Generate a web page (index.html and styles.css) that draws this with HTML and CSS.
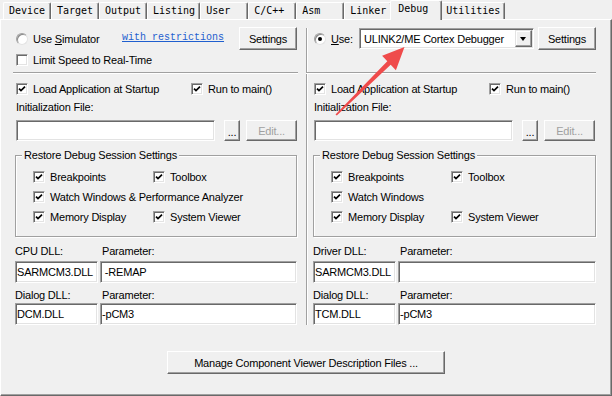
FILE: index.html
```html
<!DOCTYPE html>
<html lang="en">
<head>
    <meta charset="UTF-8">
    <title>Options - Debug</title>
    <link rel="stylesheet" href="styles.css">
</head>
<body>
<div class="dialog">
    <div class="tabs">
        <span class="tab">Device</span>
        <span class="tab">Target</span>
        <span class="tab">Output</span>
        <span class="tab">Listing</span>
        <span class="tab">User</span>
        <span class="tab">C/C++</span>
        <span class="tab">Asm</span>
        <span class="tab">Linker</span>
        <span class="tab active">Debug</span>
        <span class="tab">Utilities</span>
    </div>

    <div class="panel">
        <div class="columns">
            <!-- simulator side -->
            <div class="pane">
                <div class="top-row">
                    <span class="opt sim-opt"><span class="radio"></span><span>Use <u>S</u>imulator</span></span>
                    <span class="link">with restrictions</span>
                    <span class="btn settings">Settings</span>
                </div>
                <span class="opt limit-row"><span class="check"></span>Limit Speed to Real-Time</span>
                <div class="sep sep-left"></div>
                <div class="pair">
                    <span class="opt col-a"><span class="check"><svg viewBox="0 0 8 8"><path d="M1 3.6 L3 5.6 L7 1.6"/></svg></span>Load Application at Startup</span>
                    <span class="opt"><span class="check"><svg viewBox="0 0 8 8"><path d="M1 3.6 L3 5.6 L7 1.6"/></svg></span>Run to main()</span>
                </div>
                <div class="label-row">Initialization File:</div>
                <div class="file-row">
                    <span class="field file"></span>
                    <span class="btn dots">...</span>
                    <span class="btn edit">Edit...</span>
                </div>
                <div class="group">
                    <span class="legend">Restore Debug Session Settings</span>
                    <div class="group-grid">
                        <span class="opt"><span class="check"><svg viewBox="0 0 8 8"><path d="M1 3.6 L3 5.6 L7 1.6"/></svg></span>Breakpoints</span>
                        <span class="opt"><span class="check"><svg viewBox="0 0 8 8"><path d="M1 3.6 L3 5.6 L7 1.6"/></svg></span>Toolbox</span>
                        <span class="opt wide"><span class="check"><svg viewBox="0 0 8 8"><path d="M1 3.6 L3 5.6 L7 1.6"/></svg></span>Watch Windows &amp; Performance Analyzer</span>
                        <span class="opt"><span class="check"><svg viewBox="0 0 8 8"><path d="M1 3.6 L3 5.6 L7 1.6"/></svg></span>Memory Display</span>
                        <span class="opt"><span class="check"><svg viewBox="0 0 8 8"><path d="M1 3.6 L3 5.6 L7 1.6"/></svg></span>System Viewer</span>
                    </div>
                </div>
                <div class="dll-grid">
                    <span class="dll-label">CPU DLL:</span>
                    <span class="dll-label param">Parameter:</span>
                    <span class="field first-field">SARMCM3.DLL</span>
                    <span class="field first-field param"> -REMAP</span>
                    <span class="dll-label second-label">Dialog DLL:</span>
                    <span class="dll-label second-label param">Parameter:</span>
                    <span class="field second-field">DCM.DLL</span>
                    <span class="field second-field param">-pCM3</span>
                </div>
            </div>

            <div class="vsep"></div>

            <!-- target driver side -->
            <div class="pane right">
                <div class="top-row">
                    <span class="opt use-opt"><span class="radio on"></span><span><u>U</u>se:</span></span>
                    <span class="combo">ULINK2/ME Cortex Debugger<span class="combo-btn"></span></span>
                    <span class="btn settings">Settings</span>
                </div>
                <span class="limit-row blank"></span>
                <div class="sep sep-right"></div>
                <div class="pair">
                    <span class="opt col-a"><span class="check"><svg viewBox="0 0 8 8"><path d="M1 3.6 L3 5.6 L7 1.6"/></svg></span>Load Application at Startup</span>
                    <span class="opt"><span class="check"><svg viewBox="0 0 8 8"><path d="M1 3.6 L3 5.6 L7 1.6"/></svg></span>Run to main()</span>
                </div>
                <div class="label-row">Initialization File:</div>
                <div class="file-row">
                    <span class="field file"></span>
                    <span class="btn dots">...</span>
                    <span class="btn edit">Edit...</span>
                </div>
                <div class="group">
                    <span class="legend">Restore Debug Session Settings</span>
                    <div class="group-grid">
                        <span class="opt"><span class="check"><svg viewBox="0 0 8 8"><path d="M1 3.6 L3 5.6 L7 1.6"/></svg></span>Breakpoints</span>
                        <span class="opt"><span class="check"><svg viewBox="0 0 8 8"><path d="M1 3.6 L3 5.6 L7 1.6"/></svg></span>Toolbox</span>
                        <span class="opt"><span class="check"><svg viewBox="0 0 8 8"><path d="M1 3.6 L3 5.6 L7 1.6"/></svg></span>Watch Windows</span>
                        <span></span>
                        <span class="opt"><span class="check"><svg viewBox="0 0 8 8"><path d="M1 3.6 L3 5.6 L7 1.6"/></svg></span>Memory Display</span>
                        <span class="opt"><span class="check"><svg viewBox="0 0 8 8"><path d="M1 3.6 L3 5.6 L7 1.6"/></svg></span>System Viewer</span>
                    </div>
                </div>
                <div class="dll-grid">
                    <span class="dll-label">Driver DLL:</span>
                    <span class="dll-label param">Parameter:</span>
                    <span class="field first-field">SARMCM3.DLL</span>
                    <span class="field first-field param"></span>
                    <span class="dll-label second-label">Dialog DLL:</span>
                    <span class="dll-label second-label param">Parameter:</span>
                    <span class="field second-field">TCM.DLL</span>
                    <span class="field second-field param">-pCM3</span>
                </div>
            </div>
        </div>

        <div class="bottom">
            <span class="btn manage">Manage Component Viewer Description Files ...</span>
        </div>
    </div>

    <!-- annotation arrow drawn over the dialog -->
    <svg class="arrow" viewBox="0 0 612 396">
        <polygon points="335.5,114.5 336.8,115.6 390.7,64.8 395.9,70.2 404.5,47 382.1,55.8 387.3,61.2"/>
    </svg>
</div>
</body>
</html>
```

FILE: styles.css
```css
* {
    box-sizing: border-box;
}

body {
    margin: 0;
    background: #f0f0f0;
    font-family: "Liberation Sans", Arial, sans-serif;
    font-size: 11px;
    letter-spacing: -0.2px;
    color: #000;
}

.dialog {
    position: relative;
    width: 612px;
    height: 396px;
}

/* tab strip */
.tabs {
    display: flex;
    align-items: flex-end;
    height: 19px;
    padding-left: 3px;
}

.tab {
    height: 17px;
    min-width: 48px;
    padding: 0 4px 0 5px;
    font-family: "DejaVu Sans Mono", monospace;
    font-size: 10px;
    letter-spacing: 0;
    line-height: 15px;
    border-top: 1px solid #fff;
    border-left: 1px solid #fff;
    border-right: 1px solid #696969;
    box-shadow: inset -1px 0 #a0a0a0;
    border-radius: 2px 2px 0 0;
}

.tab.active {
    position: relative;
    z-index: 1;
    height: 20px;
    min-width: 52px;
    margin: 0 -2px -1px;
    padding: 0 6px 0 7px;
    background: #f0f0f0;
}

/* page body */
.panel {
    height: 377px;
    border-top: 1px solid #fff;
    border-left: 1px solid #fff;
    border-right: 1px solid #696969;
    border-bottom: 1px solid #696969;
    box-shadow: inset -1px -1px #a0a0a0;
}

.columns {
    display: flex;
    padding: 7px 0 0 15px;
}

.pane {
    display: flex;
    flex-direction: column;
    width: 281px;
}

.pane.right {
    width: 282px;
}

.vsep {
    width: 2px;
    margin: 1px 6px 0 9px;
    border-left: 1px solid #a0a0a0;
    border-right: 1px solid #fff;
}

.top-row {
    display: flex;
    align-items: center;
    height: 23px;
}

.opt {
    display: flex;
    align-items: center;
    gap: 5px;
    height: 13px;
    white-space: nowrap;
}

.sim-opt {
    width: 106px;
}

.use-opt {
    width: 45px;
}

.link {
    font-family: "Liberation Mono", monospace;
    font-size: 10px;
    letter-spacing: 0;
    color: #1f5fcf;
    text-decoration: underline;
    margin-top: -3px;
}

.settings {
    width: 58px;
    margin-left: auto;
}

.limit-row {
    margin-top: 3px;
    height: 13px;
}

.sep {
    height: 2px;
    margin-top: 6px;
    border-top: 1px solid #a0a0a0;
    border-bottom: 1px solid #fff;
}

.sep-left {
    margin-left: -3px;
    margin-right: -1px;
}

.sep-right {
    margin-left: -8px;
}

.pair {
    display: flex;
    margin-top: 8px;
}

.col-a {
    width: 175px;
}

.label-row {
    margin-top: 5px;
    height: 14px;
    line-height: 14px;
}

.file-row {
    display: flex;
    margin-top: 6px;
    height: 21px;
}

/* controls */
.radio {
    position: relative;
    width: 12px;
    height: 12px;
    border-radius: 50%;
    background: #fff;
    border: 1px solid;
    border-color: #a0a0a0 #e3e3e3 #e3e3e3 #a0a0a0;
    box-shadow: inset 1px 1px #8a8a8a;
}

.radio.on::after {
    content: "";
    position: absolute;
    left: 3px;
    top: 3px;
    width: 4px;
    height: 4px;
    border-radius: 50%;
    background: #000;
}

.check {
    display: flex;
    align-items: center;
    justify-content: center;
    width: 12px;
    height: 12px;
    flex: none;
    background: #fff;
    border: 1px solid;
    border-color: #a0a0a0 #fff #fff #a0a0a0;
    box-shadow: inset 1px 1px #696969, inset -1px -1px #e3e3e3;
}

.check svg {
    width: 8px;
    height: 8px;
    fill: none;
    stroke: #000;
    stroke-width: 1.7;
}

.btn {
    display: flex;
    align-items: center;
    justify-content: center;
    height: 23px;
    background: #f0f0f0;
    border: 1px solid;
    border-color: #fff #696969 #696969 #fff;
    box-shadow: inset -1px -1px #a0a0a0;
    white-space: nowrap;
}

.file-row .btn {
    height: 21px;
}

.dots {
    width: 16px;
    margin-left: 9px;
    padding-top: 3px;
}

.edit {
    width: 51px;
    margin-left: 6px;
    color: #a0a0a0;
}

.field {
    display: block;
    height: 22px;
    background: #fff;
    border: 1px solid;
    border-color: #a0a0a0 #fff #fff #a0a0a0;
    box-shadow: inset 1px 1px #696969, inset -1px -1px #e3e3e3;
    padding: 0 1px;
    line-height: 20px;
    white-space: pre;
    overflow: hidden;
}

.file {
    width: 199px;
    height: 21px;
}

.combo {
    display: flex;
    align-items: center;
    width: 175px;
    height: 21px;
    padding: 0 1px 0 4px;
    background: #fff;
    border: 1px solid;
    border-color: #a0a0a0 #fff #fff #a0a0a0;
    box-shadow: inset 1px 1px #696969, inset -1px -1px #e3e3e3;
    white-space: nowrap;
}

.combo-btn {
    position: relative;
    width: 17px;
    height: 17px;
    margin-left: auto;
    background: #f0f0f0;
    border: 1px solid;
    border-color: #e3e3e3 #696969 #696969 #e3e3e3;
    box-shadow: inset -1px -1px #a0a0a0, inset 1px 1px #fff;
}

.combo-btn::after {
    content: "";
    position: absolute;
    left: 4px;
    top: 6px;
    border-left: 3.5px solid transparent;
    border-right: 3.5px solid transparent;
    border-top: 4px solid #000;
}

/* group box */
.group {
    position: relative;
    margin: 14px 0 0 -1px;
    padding: 14px 0 13px 17px;
    border: 1px solid #a0a0a0;
    box-shadow: inset 1px 1px #fff, 1px 1px #fff;
}

.legend {
    position: absolute;
    top: -7px;
    left: 6px;
    padding: 0 2px;
    line-height: 13px;
    background: #f0f0f0;
}

.group-grid {
    display: grid;
    grid-template-columns: 120px auto;
    grid-auto-rows: 13px;
    row-gap: 7px;
}

.group-grid .wide {
    grid-column: span 2;
}

/* dll fields */
.dll-grid {
    display: grid;
    grid-template-columns: 83px 1fr;
    column-gap: 2px;
    margin: 7px 0 0 -1px;
}

.dll-label {
    height: 14px;
    line-height: 14px;
}

.dll-label.param {
    padding-left: 2px;
}

.first-field {
    margin-top: 3px;
}

.second-label {
    margin-top: 5px;
}

.second-field {
    margin-top: 1px;
}

.bottom {
    display: flex;
    justify-content: center;
    margin-top: 26px;
}

.manage {
    width: 278px;
}

.arrow {
    position: absolute;
    left: 0;
    top: 0;
    width: 612px;
    height: 396px;
    pointer-events: none;
}

.arrow polygon {
    fill: #ef4b4b;
}
```
